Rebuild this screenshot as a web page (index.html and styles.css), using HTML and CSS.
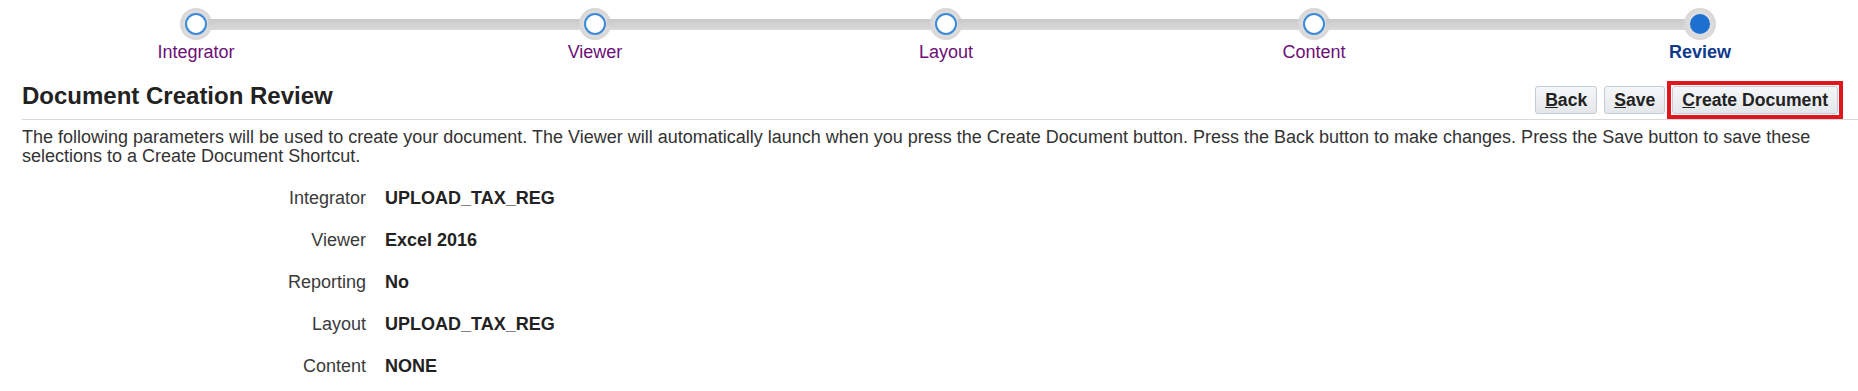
FILE: index.html
```html
<!DOCTYPE html>
<html lang="en">
<head>
  <meta charset="UTF-8" />
  <meta name="viewport" content="width=device-width, initial-scale=1.0" />
  <title>Document Creation Review</title>
  <link rel="stylesheet" href="styles.css">
</head>
<body>
  <!-- train -->
  <div class="train">
    <div class="stop"><span class="dot"></span></div>
    <div class="track"></div>
    <div class="stop"><span class="dot"></span></div>
    <div class="track"></div>
    <div class="stop"><span class="dot"></span></div>
    <div class="track"></div>
    <div class="stop"><span class="dot"></span></div>
    <div class="track"></div>
    <div class="stop current"><span class="dot"></span></div>

    <div class="label c1">Integrator</div>
    <div class="label c3">Viewer</div>
    <div class="label c5">Layout</div>
    <div class="label c7">Content</div>
    <div class="label c9 current">Review</div>
  </div>

  <!-- header -->
  <div class="header">
    <h1>Document Creation Review</h1>
    <div class="buttons">
      <button><u>B</u>ack</button>
      <button><u>S</u>ave</button>
      <span class="highlight"><button><u>C</u>reate Document</button></span>
    </div>
  </div>

  <p class="intro">The following parameters will be used to create your document. The Viewer will automatically launch when you press the Create Document button. Press the Back button to make changes. Press the Save button to save these selections to a Create Document Shortcut.</p>

  <!-- parameters -->
  <div class="params">
    <div class="name">Integrator</div><div class="value">UPLOAD_TAX_REG</div>
    <div class="name">Viewer</div><div class="value">Excel 2016</div>
    <div class="name">Reporting</div><div class="value">No</div>
    <div class="name">Layout</div><div class="value">UPLOAD_TAX_REG</div>
    <div class="name">Content</div><div class="value">NONE</div>
  </div>
</body>
</html>
```

FILE: styles.css
```css
body {
  font-family: "Liberation Sans", Arial, sans-serif;
  font-size: 18px;
  margin: 0;
  padding: 0;
  color: #333;
  background: #fff;
}

.train {
  display: grid;
  grid-template-columns: 32px 367px 32px 319px 32px 336px 32px 354px 32px;
  grid-template-rows: 32px 22px;
  row-gap: 2px;
  margin: 8px 0 0 180px;
}

.stop {
  width: 32px;
  height: 32px;
  border-radius: 50%;
  background: radial-gradient(circle, #dcdcdc 55%, #cbcbcb 100%);
  display: flex;
  align-items: center;
  justify-content: center;
}

.dot {
  width: 18px;
  height: 18px;
  border-radius: 50%;
  background: #fff;
  border: 2px solid #3a8ad9;
}

.stop.current .dot {
  width: 20px;
  height: 20px;
  border: none;
  background: #1b70d0;
}

.track {
  align-self: center;
  height: 11px;
  margin: 0 -4px;
  background: linear-gradient(#c9c9c9, #dadada);
}

.label {
  grid-row: 2;
  display: flex;
  justify-content: center;
  white-space: nowrap;
  line-height: 20px;
  color: #6c1077;
}

.label.c1 { grid-column: 1; }
.label.c3 { grid-column: 3; }
.label.c5 { grid-column: 5; }
.label.c7 { grid-column: 7; }
.label.c9 { grid-column: 9; }

.label.current {
  color: #0f3a8a;
  font-weight: bold;
}

.header {
  display: flex;
  justify-content: space-between;
  align-items: flex-start;
  margin-left: 22px;
  padding: 18px 15px 9px 0;
  border-bottom: 1px solid #d9d9d9;
}

h1 {
  margin: 0;
  font-size: 24px;
  line-height: 28px;
  color: #222;
}

.buttons {
  display: flex;
  align-items: center;
  gap: 7px;
  margin: -1px 0 -12px;
}

button {
  font-family: inherit;
  font-size: 17.6px;
  font-weight: bold;
  line-height: 20px;
  height: 28px;
  padding: 0 9px;
  color: #222;
  background: linear-gradient(#f5f6f7, #e4e7ea);
  border: 1px solid #c3cbd3;
  border-radius: 3px;
  cursor: pointer;
}

/* red box drawn round the button in the screenshot */
.highlight {
  display: flex;
  padding: 1px;
  margin-left: -5px;
  border: 4px solid #e2141d;
}

.intro {
  margin: 8px 20px 0 22px;
  line-height: 19px;
}

.params {
  display: grid;
  grid-template-columns: 344px auto;
  grid-auto-rows: 42px;
  column-gap: 19px;
  align-items: center;
  margin: 11px 0 0 22px;
}

.name {
  text-align: right;
  color: #3a3a3a;
}

.value {
  font-weight: bold;
  color: #222;
}
```
